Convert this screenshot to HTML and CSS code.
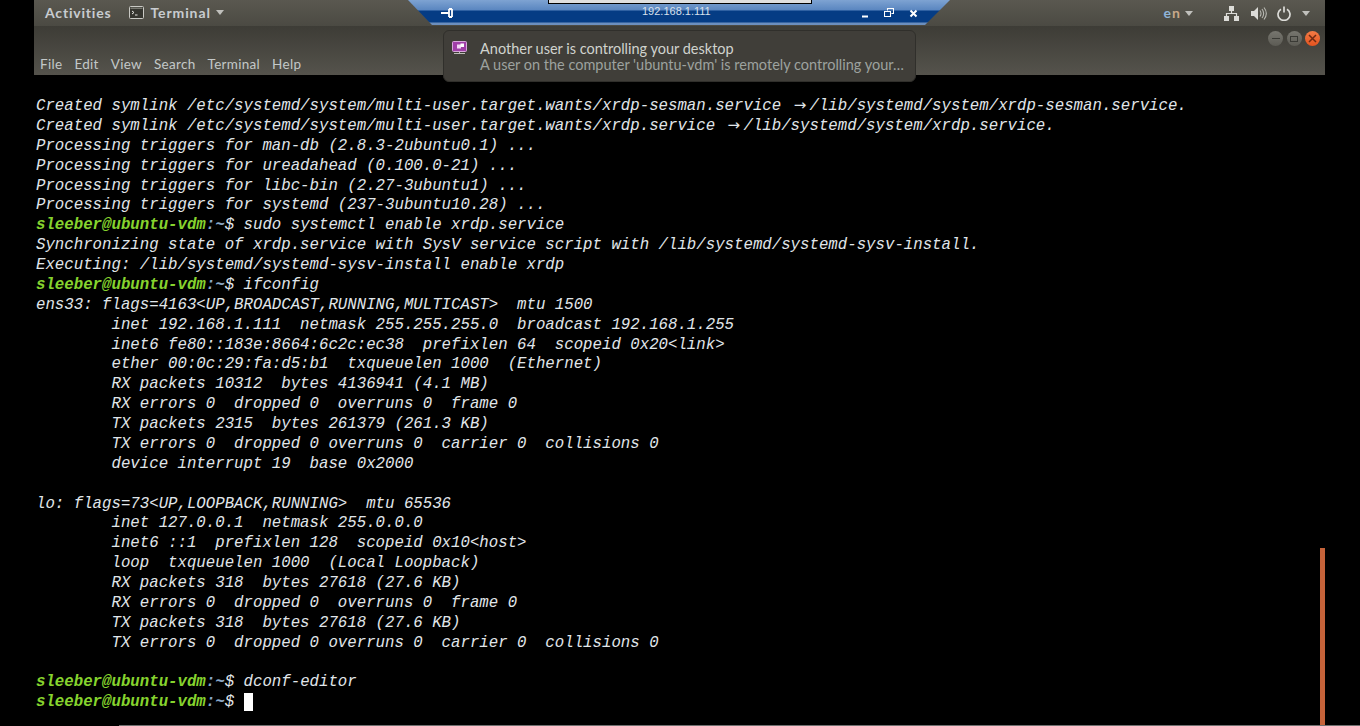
FILE: index.html
```html
<!DOCTYPE html>
<html lang="en">
<head>
<meta charset="utf-8">
<title>Terminal</title>
<link rel="stylesheet" href="styles.css">
</head>
<body>
<div class="window">
  <header class="panel">
    <span class="activities">Activities</span>
    <span class="app">
      <svg class="app-icon" width="15" height="13" viewBox="0 0 15 13"><rect x="0.5" y="0.5" width="14" height="12" rx="1" fill="#35352f" stroke="#c9c9c4"/><rect x="1.5" y="1.5" width="12" height="1.5" fill="#77776f"/><path d="M3 5l2 1.5-2 1.5M6 9h2.5" fill="none" stroke="#e8e8e4"/></svg>
      Terminal
      <i class="caret"></i>
    </span>
    <span class="status">
      <span class="lang"><b class="lang-e">e</b><b class="lang-n">n</b></span>
      <i class="caret caret-lang"></i>
      <svg class="net" width="15" height="15" viewBox="0 0 15 15"><path d="M5 0h5v5H5zM0 10h5v5H0zM10 10h5v5h-5z" fill="#dcdcd8"/><path d="M7.5 5v2.5M2.5 10V7.5h10V10" fill="none" stroke="#dcdcd8" stroke-width="1.2"/></svg>
      <svg class="vol" width="16" height="15" viewBox="0 0 16 15"><path d="M0 5h3l4-4v13l-4-4H0z" fill="#dcdcd8"/><path d="M9 4.5c1.2 1.800 1.200 4.200 0 6M11 3c2 2.700 2 6.300 0 9M13 1.500c2.800 3.600 2.800 8.400 0 12" fill="none" stroke="#b8b8b2" stroke-width="1.100"/></svg>
      <svg class="power" width="14" height="15" viewBox="0 0 14 15"><path d="M4 3.200a6 6 0 1 0 6 0" fill="none" stroke="#dcdcd8" stroke-width="1.700"/><path d="M7 .5v6" fill="none" stroke="#dcdcd8" stroke-width="1.700"/></svg>
      <i class="caret"></i>
    </span>
  </header>
  <div class="titlebar">
    <nav class="menus">
      <span>File</span><span>Edit</span><span>View</span><span>Search</span><span>Terminal</span><span>Help</span>
    </nav>
    <div class="controls">
      <span class="ctl"><i class="ctl-min"></i></span>
      <span class="ctl"><i class="ctl-max"></i></span>
      <span class="ctl ctl-close"><svg width="9" height="9" viewBox="0 0 9 9"><path d="M1 1l7 7M8 1l-7 7" stroke="#6e2a12" stroke-width="1.500"/></svg></span>
    </div>
  </div>
  <main class="term">
<pre class="out">Created symlink /etc/systemd/system/multi-user.target.wants/xrdp-sesman.service <span class="arrow">→</span> /lib/systemd/system/xrdp-sesman.service.
Created symlink /etc/systemd/system/multi-user.target.wants/xrdp.service <span class="arrow">→</span> /lib/systemd/system/xrdp.service.
Processing triggers for man-db (2.8.3-2ubuntu0.1) ...
Processing triggers for ureadahead (0.100.0-21) ...
Processing triggers for libc-bin (2.27-3ubuntu1) ...
Processing triggers for systemd (237-3ubuntu10.28) ...
<b class="u">sleeber@ubuntu-vdm</b><b class="p">:~</b>$ sudo systemctl enable xrdp.service
Synchronizing state of xrdp.service with SysV service script with /lib/systemd/systemd-sysv-install.
Executing: /lib/systemd/systemd-sysv-install enable xrdp
<b class="u">sleeber@ubuntu-vdm</b><b class="p">:~</b>$ ifconfig
ens33: flags=4163&lt;UP,BROADCAST,RUNNING,MULTICAST&gt;  mtu 1500
        inet 192.168.1.111  netmask 255.255.255.0  broadcast 192.168.1.255
        inet6 fe80::183e:8664:6c2c:ec38  prefixlen 64  scopeid 0x20&lt;link&gt;
        ether 00:0c:29:fa:d5:b1  txqueuelen 1000  (Ethernet)
        RX packets 10312  bytes 4136941 (4.1 MB)
        RX errors 0  dropped 0  overruns 0  frame 0
        TX packets 2315  bytes 261379 (261.3 KB)
        TX errors 0  dropped 0 overruns 0  carrier 0  collisions 0
        device interrupt 19  base 0x2000

lo: flags=73&lt;UP,LOOPBACK,RUNNING&gt;  mtu 65536
        inet 127.0.0.1  netmask 255.0.0.0
        inet6 ::1  prefixlen 128  scopeid 0x10&lt;host&gt;
        loop  txqueuelen 1000  (Local Loopback)
        RX packets 318  bytes 27618 (27.6 KB)
        RX errors 0  dropped 0  overruns 0  frame 0
        TX packets 318  bytes 27618 (27.6 KB)
        TX errors 0  dropped 0 overruns 0  carrier 0  collisions 0

<b class="u">sleeber@ubuntu-vdm</b><b class="p">:~</b>$ dconf-editor
<b class="u">sleeber@ubuntu-vdm</b><b class="p">:~</b>$ <span class="cursor"> </span></pre>
    <div class="scrollbar"></div>
  </main>
</div>

<div class="conn">
  <div class="conn-tab"></div>
  <div class="conn-bar">
    <svg class="pin" width="12" height="10" viewBox="0 0 12 10"><path d="M0 5h8M8 1v8M11 1v8M8 1h3M8 9h3" fill="none" stroke="#fff" stroke-width="1.800"/></svg>
    <span class="conn-host">192.168.1.111</span>
    <span class="conn-btns">
      <svg width="8" height="10" viewBox="0 0 8 10"><path d="M1 8.500h6" stroke="#fff" stroke-width="2"/></svg>
      <svg width="10" height="10" viewBox="0 0 10 10"><path d="M3.500 2.500V.5h6v5H7.500M.5 3.500h6v5h-6z" fill="none" stroke="#fff" stroke-width="1.100"/></svg>
      <svg width="9" height="9" viewBox="0 0 9 9"><path d="M1.500 1.500l6 6M7.500 1.500l-6 6" stroke="#fff" stroke-width="2"/></svg>
    </span>
  </div>
</div>

<aside class="toast">
  <svg class="toast-icon" width="15" height="14" viewBox="0 0 15 14"><rect x="0.500" y="0.500" width="14" height="10" rx="1" fill="#a03fa8" stroke="#d8a8dc"/><rect x="5" y="3.500" width="4" height="4" fill="#f2d8f4"/><rect x="8.500" y="2.500" width="3.500" height="3.500" fill="#fff"/><path d="M2 12.500h11M7.500 11v1.500" stroke="#bdbdb8"/></svg>
  <div class="toast-text">
    <div class="toast-title">Another user is controlling your desktop</div>
    <div class="toast-body">A user on the computer 'ubuntu-vdm' is remotely controlling your…</div>
  </div>
</aside>

<div class="bottom-line"></div>
</body>
</html>
```
FILE: styles.css
```css
* { box-sizing: border-box; }
html, body { margin: 0; height: 726px; overflow: hidden; background: #000; }
body { font-family: "Lato", "Open Sans", sans-serif; }

.window {
  margin-left: 34px;
  width: 1291px;
  height: 726px;
  display: flex;
  flex-direction: column;
}

.panel {
  height: 26px;
  flex: none;
  display: flex;
  align-items: center;
  color: #c8ccd0;
  background: linear-gradient(#5a5850, #4b4a43);
  font-size: 14px;
  font-weight: 700;
}
.activities { margin-left: 11px; margin-top: -2px; letter-spacing: .8px; }
.app { margin-left: 18px; margin-top: -2px; display: flex; align-items: center; letter-spacing: .9px; }
.app-icon { margin-right: 6px; }
.caret {
  display: inline-block;
  width: 0;
  height: 0;
  border-left: 4.500px solid transparent;
  border-right: 4.500px solid transparent;
  border-top: 5px solid #c0c0bc;
}
.app .caret { margin-left: 5px; }
.status { margin-left: auto; display: flex; align-items: center; padding-right: 15px; }
.lang { font-size: 14px; letter-spacing: 1px; margin-top: -2px; }
.lang b { font-weight: 700; }
.lang-e { color: #8fb4d8; }
.lang-n { color: #c8a88a; }
.caret-lang { margin-left: 4px; margin-right: 31px; }
.vol { margin-left: 12px; }
.power { margin-left: 10px; margin-right: 11px; }

.titlebar {
  height: 49px;
  flex: none;
  position: relative;
  display: flex;
  align-items: flex-end;
  background: linear-gradient(#3d3c36, #55534c);
}
.menus {
  display: flex;
  gap: 12px;
  padding: 0 0 3px 6px;
  font-size: 13.500px;
  line-height: 16px;
  letter-spacing: .3px;
  color: #c3c8c8;
}
.controls {
  position: absolute;
  top: 5px;
  right: 5px;
  display: flex;
  gap: 3.500px;
}
.ctl {
  width: 15px;
  height: 15px;
  border-radius: 50%;
  background: linear-gradient(#77766f, #5c5b54);
  display: flex;
  align-items: center;
  justify-content: center;
}
.ctl-min { width: 8px; height: 1px; background: #3a3a35; }
.ctl-max { width: 8px; height: 6px; border: 1px solid #3a3a35; }
.ctl-close { background: linear-gradient(#f47b45, #e3531f); }

.term { flex: 1; position: relative; min-height: 0; }
.out {
  margin: 0;
  padding: 22px 0 0 2px;
  font-family: "Liberation Mono", monospace;
  font-style: italic;
  font-size: 15.720px;
  line-height: 19.870px;
  color: #e0e6ea;
}
.u { color: #86d32e; font-weight: 700; }
.p { color: #8aa6c6; font-weight: 700; }
.arrow {
  display: inline-block;
  width: 9.430px;
  line-height: 1;
  transform: translateX(3px);
  font-family: "DejaVu Sans", sans-serif;
  font-size: 15px;
  font-style: normal;
}
.cursor { background: #fff; }
.scrollbar {
  position: absolute;
  top: 473px;
  right: 0;
  bottom: 0;
  width: 5px;
  background: #c5633a;
}

.conn {
  position: absolute;
  top: 0;
  left: 408px;
  width: 542px;
  height: 25px;
}
.conn-tab {
  position: absolute;
  top: 0;
  left: 140px;
  width: 264px;
  height: 4px;
  background: #dedede;
  border: 1px solid #000;
  border-top: 0;
  z-index: 1;
}
.conn-bar {
  height: 100%;
  clip-path: polygon(0 0, 100% 0, calc(100% - 25px) 100%, 24px 100%);
  background: linear-gradient(#7ea3d2 0, #5a86c0 10px, #053c84 11px, #053c84 22px, #6c8fbe 23px, #6c8fbe 25px);
  display: flex;
  align-items: center;
  position: relative;
  color: #d8e0ec;
  font-size: 11px;
  padding-top: 1px;
}
.pin { margin-left: 33px; }
.conn-host { position: absolute; left: 234px; top: 5px; font-family: "Liberation Sans", sans-serif; }
.conn-btns { margin-left: auto; margin-right: 32px; display: flex; align-items: center; gap: 15px; }

.toast {
  position: absolute;
  top: 30px;
  left: 443px;
  width: 473px;
  height: 52px;
  display: flex;
  padding: 10px 10px 9px 8px;
  background: #403e39;
  border: 1px solid #302f2b;
  border-radius: 6px;
  color: #d0d3ce;
  font-size: 14.500px;
}
.toast-icon { margin: 0 13px 0 0; flex: none; }
.toast-text { line-height: 16px; white-space: nowrap; }
.toast-body { color: #9da29f; }

.bottom-line {
  position: absolute;
  left: 119px;
  right: 0;
  top: 725px;
  height: 1px;
  background: #6f6f6f;
}
```
